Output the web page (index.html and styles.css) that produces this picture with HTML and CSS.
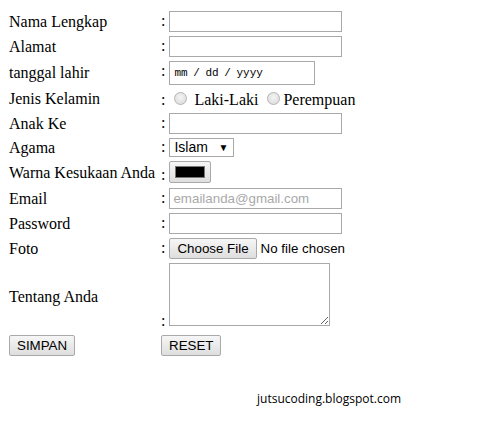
FILE: index.html
```html
<!DOCTYPE html>
<html lang="en">
<head>
    <meta charset="UTF-8">
    <title>Form Biodata</title>
    <link rel="stylesheet" href="styles.css">
</head>
<body>
    <form>
        <table class="form-table">
            <tr>
                <td class="label">Nama Lengkap</td>
                <td>: <input type="text" class="text-input"></td>
            </tr>
            <tr>
                <td class="label">Alamat</td>
                <td>: <input type="text" class="text-input"></td>
            </tr>
            <tr>
                <td class="label">tanggal lahir</td>
                <td>: <span class="date-input">mm / dd / yyyy</span></td>
            </tr>
            <tr>
                <td class="label">Jenis Kelamin</td>
                <td>: <input type="radio" name="jk" class="radio"> Laki-Laki <input type="radio" name="jk" class="radio">Perempuan</td>
            </tr>
            <tr>
                <td class="label">Anak Ke</td>
                <td>: <input type="text" class="text-input"></td>
            </tr>
            <tr>
                <td class="label">Agama</td>
                <td>: <span class="select-box">Islam<span class="arrow">&#9660;</span></span></td>
            </tr>
            <tr>
                <td class="label">Warna Kesukaan Anda</td>
                <td>: <button type="button" class="color-btn"><span class="swatch"></span></button></td>
            </tr>
            <tr>
                <td class="label">Email</td>
                <td>: <input type="email" class="text-input" placeholder="emailanda@gmail.com"></td>
            </tr>
            <tr>
                <td class="label">Password</td>
                <td>: <input type="password" class="text-input"></td>
            </tr>
            <tr>
                <td class="label">Foto</td>
                <td>: <button type="button" class="btn">Choose File</button> <span class="file-name">No file chosen</span></td>
            </tr>
            <tr>
                <td class="label">Tentang Anda</td>
                <td>: <textarea class="about"></textarea></td>
            </tr>
            <tr class="actions">
                <td class="label"><button type="submit" class="btn">SIMPAN</button></td>
                <td><button type="reset" class="btn">RESET</button></td>
            </tr>
        </table>
    </form>
    <p class="credit">jutsucoding.blogspot.com</p>
</body>
</html>
```

FILE: styles.css
```css
body {
    margin: 8px;
    font-family: "Liberation Serif", "Times New Roman", serif;
    font-size: 16px;
    color: #000;
    background-color: #fff;
}
.form-table {
    border-spacing: 0 2px;
}
.form-table td {
    padding: 1px;
    vertical-align: middle;
    white-space: nowrap;
}
.form-table .actions td {
    padding-top: 2px;
}
.label {
    width: 150px;
}
.text-input {
    box-sizing: border-box;
    width: 173px;
    height: 21px;
    margin: 0;
    padding: 1px 3px;
    border: 1px solid #a9a9a9;
    font-family: "Liberation Sans", Arial, sans-serif;
    font-size: 13.33px;
    vertical-align: baseline;
}
.text-input::placeholder {
    color: #a9a9a9;
}
.date-input {
    display: inline-block;
    box-sizing: border-box;
    width: 146px;
    height: 24px;
    padding: 3px 4px;
    border: 1px solid #a9a9a9;
    font-family: "Liberation Mono", monospace;
    font-size: 11px;
    line-height: 16px;
    word-spacing: -1px;
    vertical-align: baseline;
}
.radio {
    appearance: none;
    box-sizing: border-box;
    width: 13px;
    height: 13px;
    margin: 3px 3px 0 5px;
    border: 1px solid #b4b4b4;
    border-radius: 50%;
    background: radial-gradient(circle at 50% 40%, #f4f4f4, #d8d8d8);
    vertical-align: baseline;
}
.select-box {
    position: relative;
    display: inline-block;
    box-sizing: border-box;
    width: 65px;
    height: 19px;
    padding: 0 4px;
    border: 1px solid #a9a9a9;
    font-family: "Liberation Sans", Arial, sans-serif;
    font-size: 14px;
    line-height: 17px;
}
.arrow {
    position: absolute;
    right: 5px;
    top: 0;
    font-size: 10px;
}
.color-btn {
    display: inline-block;
    box-sizing: border-box;
    width: 42px;
    height: 22px;
    margin: 0 0 1px;
    padding: 4px 5px;
    border: 1px solid #a9a9a9;
    border-radius: 2px;
    background: linear-gradient(#f6f6f6, #dedede);
    vertical-align: bottom;
}
.swatch {
    display: block;
    height: 12px;
    background-color: #000;
    border: 1px solid #777;
    box-sizing: border-box;
}
.btn {
    box-sizing: border-box;
    height: 21px;
    margin: 0;
    padding: 1px 7px;
    border: 1px solid #a9a9a9;
    border-radius: 2px;
    background: linear-gradient(#f6f6f6, #dedede);
    font-family: "Liberation Sans", Arial, sans-serif;
    font-size: 13.33px;
    color: #000;
}
.file-name {
    font-family: "Liberation Sans", Arial, sans-serif;
    font-size: 13.33px;
}
.about {
    box-sizing: border-box;
    width: 161px;
    height: 63px;
    margin: 0;
    border: 1px solid #a9a9a9;
    vertical-align: baseline;
}
.credit {
    margin: 31px 0 0 249px;
    font-family: "Open Sans", sans-serif;
    font-size: 12px;
    color: #000;
}
```
